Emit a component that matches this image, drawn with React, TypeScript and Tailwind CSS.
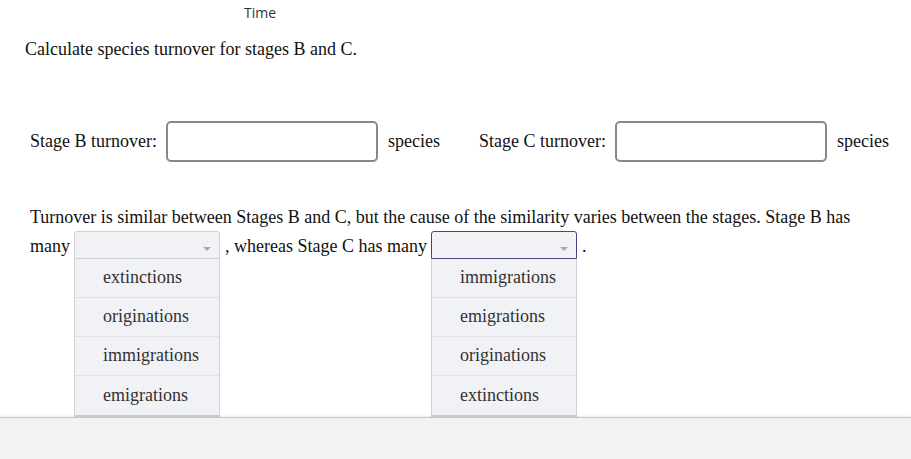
import React from "react";

const SERIF = "font-['Liberation_Serif','Times_New_Roman',serif]";

const LIST_B = ["extinctions", "originations", "immigrations", "emigrations"];
const LIST_C = ["immigrations", "emigrations", "originations", "extinctions"];

// Open select: the box plus its option list hanging below it
const OpenSelect = ({ options, focused }: { options: string[]; focused?: boolean }) => (
  <span className="relative inline-block align-middle w-[146px] h-[28px] ml-[4px] mr-[5px] -translate-y-[3px]">
    <span
      className={`block w-full h-full rounded-t-[3px] bg-[#f1f2f6] border ${
        focused ? "border-[#4a4580] border-[1.5px]" : "border-[#cfd0d4]"
      }`}
    >
      <span className="absolute right-[9px] bottom-[8px] w-0 h-0 border-l-[4px] border-r-[4px] border-t-[4px] border-l-transparent border-r-transparent border-t-[#a9a9ad]" />
    </span>
    <span className="absolute left-0 top-[28px] w-full z-10 flex flex-col bg-[#f1f2f6] border-x border-[#cfd0d4] border-b-2 border-b-[#c9c9cc]">
      {options.map((opt) => (
        <span
          key={opt}
          className="h-[39px] flex items-center pl-[28px] text-[18px] text-[#333] border-b border-[#e0e1e5] last:border-b-0"
        >
          {opt}
        </span>
      ))}
    </span>
  </span>
);

const TurnoverField = ({ label }: { label: string }) => (
  <div className="flex items-center">
    <span>{label}</span>
    <span className="ml-[9px] w-[212px] h-[41px] rounded-[5px] border-2 border-[#888]" />
    <span className="ml-[10px]">species</span>
  </div>
);

export default function App() {
  return (
    <div className="h-[459px] w-full flex flex-col bg-white overflow-hidden">
      <div className={`h-[417px] shrink-0 text-[#111] ${SERIF}`}>
        <div className="w-[520px] text-center pt-[4px] text-[14px] leading-[18px] text-[#333] font-['Open_Sans',sans-serif]">
          Time
        </div>
        <p className="pl-[25px] mt-[14px] text-[18px] leading-[26px]">
          Calculate species turnover for stages B and C.
        </p>
        <div className="flex items-center pl-[30px] mt-[59px] text-[18px] gap-[39px]">
          <TurnoverField label="Stage B turnover:" />
          <TurnoverField label="Stage C turnover:" />
        </div>
        <p className="pl-[30px] pr-[30px] mt-[41px] text-[18px] leading-[29px]">
          Turnover is similar between Stages B and C, but the cause of the similarity varies between the
          stages. Stage B has many
          <OpenSelect options={LIST_B} />, whereas Stage C has many
          <OpenSelect options={LIST_C} focused />.
        </p>
      </div>
      <div className="flex-1 bg-[#f2f2f2] border-t border-[#c6c6c6] shadow-[0_-1px_2px_rgba(0,0,0,0.08)]" />
    </div>
  );
}
